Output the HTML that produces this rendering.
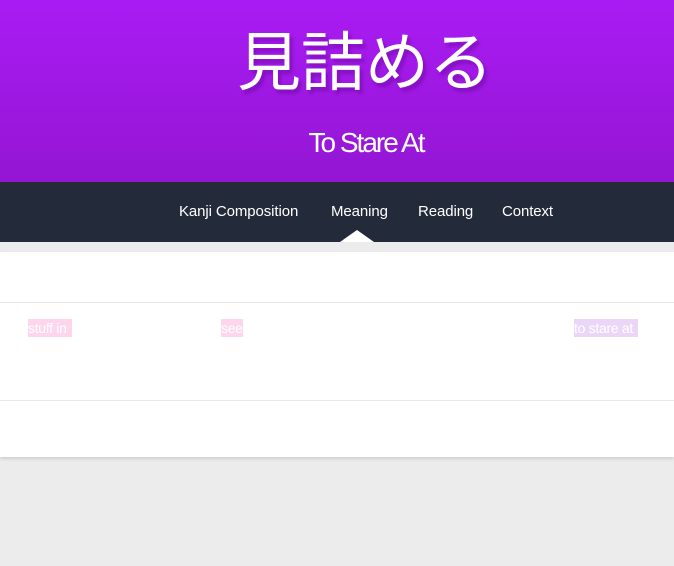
<!DOCTYPE html>
<html><head><meta charset="utf-8"><style>
body{margin:0;width:674px;height:566px;background:#ececec;font-family:"Liberation Sans","Noto Sans CJK JP",sans-serif;overflow:hidden;position:relative}
.hd{position:absolute;left:0;top:0;width:674px;height:182px;background:linear-gradient(#a91bf3,#9416d3)}
.k{position:absolute;left:0;width:730px;top:18px;text-align:center;color:#fff;font-size:64px;line-height:80px;text-shadow:3px 4px 3px rgba(80,0,120,.35);font-family:"Noto Sans CJK JP",sans-serif}
.s{position:absolute;left:0;width:732px;top:125px;text-align:center;color:#fff;font-size:28px;line-height:36px;letter-spacing:-2px;font-weight:300}
.nav{position:absolute;left:0;top:182px;width:674px;height:60px;background:#232a3a}
.nav span{position:absolute;top:21px;color:#fff;font-size:15px;line-height:18px;letter-spacing:-0.1px}
.tri{position:absolute;left:340px;top:230px;width:0;height:0;border-left:17px solid transparent;border-right:17px solid transparent;border-bottom:12px solid #fff}
.card{position:absolute;left:0;top:252px;width:674px;height:205px;background:#fff;box-shadow:0 2px 3px rgba(0,0,0,.12)}
.l{position:absolute;left:0;width:674px;height:1px;background:#e8e8e8}
.h{position:absolute;top:67px;height:18px;color:#fff;font-size:14px;line-height:18px;letter-spacing:-0.3px}
</style></head><body>
<div class="hd"><div class="k">見詰める</div><div class="s">To Stare At</div></div>
<div class="nav"><span style="left:179px">Kanji Composition</span><span style="left:331px">Meaning</span><span style="left:418px">Reading</span><span style="left:502px">Context</span></div>
<div class="tri"></div>
<div class="card">
<div class="l" style="top:50px"></div><div class="l" style="top:148px"></div>
<div class="h" style="left:28px;width:44px;background:#fdd6ee">stuff in</div>
<div class="h" style="left:221px;width:22px;background:#fdd6ee">see</div>
<div class="h" style="left:574px;width:64px;background:#ecd6f8">to stare at</div>
</div>
</body></html>
